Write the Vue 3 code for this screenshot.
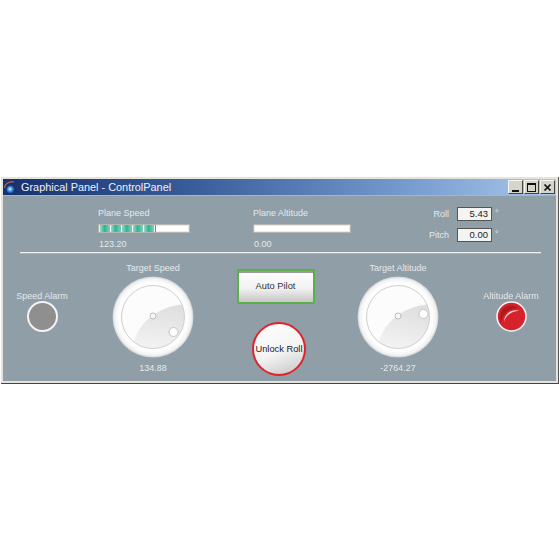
<script setup>
const segments = [0, 1, 2, 3, 4]
const knobs = {
  speed: { label: 'Target Speed', value: '134.88', x: 61.5, y: 56 },
  altitude: { label: 'Target Altitude', value: '-2764.27', x: 66.5, y: 38 }
}
</script>

<template>
  <div class="window">
    <div class="titlebar">
      <svg class="logo" width="15" height="15" viewBox="0 0 15 15">
        <defs>
          <radialGradient id="orb" cx="0.45" cy="0.45" r="0.6">
            <stop offset="0" stop-color="#e4f2ff" />
            <stop offset="0.5" stop-color="#3f8fe0" />
            <stop offset="1" stop-color="#123a80" />
          </radialGradient>
        </defs>
        <path d="M1.5 8C1.8 4 5.5 1.6 11 2" fill="none" stroke="#c8683a" stroke-width="1.2" />
        <circle cx="7.5" cy="9.5" r="3.8" fill="url(#orb)" />
      </svg>
      <span class="title">Graphical Panel - ControlPanel</span>
      <div class="controls">
        <div class="ctl"><span class="min"></span></div>
        <div class="ctl"><span class="max"></span></div>
        <div class="ctl"><svg width="9" height="9" viewBox="0 0 9 9"><path d="M1.5 1.5L7.5 7.5M7.5 1.5L1.5 7.5" stroke="#111" stroke-width="1.7" /></svg></div>
      </div>
    </div>

    <div class="panel">
      <div class="top">
        <div class="meter speed">
          <div class="label">Plane Speed</div>
          <div class="bar">
            <div class="fill">
              <span v-for="s in segments" :key="s" class="seg"></span>
              <span class="tip"></span>
            </div>
          </div>
          <div class="label val">123.20</div>
        </div>
        <div class="meter altitude">
          <div class="label">Plane Altitude</div>
          <div class="bar"></div>
          <div class="label val">0.00</div>
        </div>
        <div class="readouts">
          <div class="readout"><span class="label name">Roll</span><span class="box">5.43</span><span class="label deg">°</span></div>
          <div class="readout"><span class="label name">Pitch</span><span class="box">0.00</span><span class="label deg">°</span></div>
        </div>
      </div>

      <div class="sep"></div>

      <div class="bottom">
        <div class="alarm first">
          <div class="label">Speed Alarm</div>
          <div class="lamp off"></div>
        </div>

        <div class="knob-col first-knob">
          <div class="label">{{ knobs.speed.label }}</div>
          <svg class="knob" width="82" height="82" viewBox="0 0 82 82">
            <defs>
              <radialGradient id="kouter" cx="0.5" cy="0.5" r="0.5">
                <stop offset="0" stop-color="#ffffff" />
                <stop offset="0.86" stop-color="#fdfdfd" />
                <stop offset="0.95" stop-color="#f1f1f1" />
                <stop offset="1" stop-color="#c9cfd2" />
              </radialGradient>
              <linearGradient id="kshade" x1="0.6" y1="0" x2="0.4" y2="1">
                <stop offset="0" stop-color="#dedede" />
                <stop offset="1" stop-color="#f5f5f5" />
              </linearGradient>
              <clipPath id="kclip"><circle cx="41" cy="41" r="31.5" /></clipPath>
            </defs>
            <circle cx="41" cy="41" r="40.5" fill="url(#kouter)" />
            <circle cx="41" cy="41" r="31.5" fill="#fcfcfc" />
            <path d="M20 72C25 48 44 29 76 28L78 78Z" fill="url(#kshade)" clip-path="url(#kclip)" />
            <circle cx="41" cy="41" r="31.5" fill="none" stroke="#cfcfcf" stroke-width="1" />
            <circle cx="41" cy="40" r="3" fill="#f7f7f7" stroke="#bdbdbd" />
            <circle :cx="knobs.speed.x" :cy="knobs.speed.y" r="4.5" fill="#fff" stroke="#c4c4c4" />
          </svg>
          <div class="label val">{{ knobs.speed.value }}</div>
        </div>

        <div class="actions">
          <div class="auto">Auto Pilot</div>
          <div class="unlock">Unlock Roll</div>
        </div>

        <div class="knob-col">
          <div class="label">{{ knobs.altitude.label }}</div>
          <svg class="knob" width="82" height="82" viewBox="0 0 82 82">
            <circle cx="41" cy="41" r="40.5" fill="url(#kouter)" />
            <circle cx="41" cy="41" r="31.5" fill="#fcfcfc" />
            <path d="M20 72C25 48 44 29 76 28L78 78Z" fill="url(#kshade)" clip-path="url(#kclip)" />
            <circle cx="41" cy="41" r="31.5" fill="none" stroke="#cfcfcf" stroke-width="1" />
            <circle cx="41" cy="40" r="3" fill="#f7f7f7" stroke="#bdbdbd" />
            <circle :cx="knobs.altitude.x" :cy="knobs.altitude.y" r="4.5" fill="#fff" stroke="#c4c4c4" />
          </svg>
          <div class="label val">{{ knobs.altitude.value }}</div>
        </div>

        <div class="alarm last">
          <div class="label">Altitude Alarm</div>
          <svg class="lamp-on" width="31" height="31" viewBox="0 0 31 31">
            <circle cx="15.5" cy="15.5" r="14.5" fill="#d6222a" stroke="#f4f4f4" stroke-width="1.6" />
            <path d="M5 22C6 13 13 7.5 22 7C17 3.5 9 4 5.5 10C3.5 14 3.8 19 5 22Z" fill="#8e1218" opacity="0.55" />
            <path d="M8 21C9.5 15 14 11 23 9.5C15 8 8 13 8 21Z" fill="#f7d0d2" />
          </svg>
        </div>
      </div>
    </div>
  </div>
</template>

<style scoped>
.window {
  box-sizing: border-box;
  width: 558px;
  height: 207px;
  margin: 177px 0 0 1px;
  padding: 2px 2px 2px 2px;
  background: #e6e4da;
  border-right: 1px solid #555;
  border-bottom: 1px solid #444;
  font-family: "Liberation Sans", Arial, sans-serif;
  filter: blur(0.35px);
  display: flex;
  flex-direction: column;
}
.titlebar {
  height: 16px;
  flex: none;
  display: flex;
  align-items: center;
  padding-right: 1px;
  background: linear-gradient(90deg, #17306f 0%, #3a5e9b 35%, #7096cb 70%, #a9c8ec 100%);
  border-bottom: 1px solid #aab6bd;
}
.logo {
  flex: none;
}
.title {
  margin-left: 3px;
  font-size: 10.9px;
  color: #f0f2f6;
}
.controls {
  margin-left: auto;
  display: flex;
  gap: 1px;
}
.ctl {
  box-sizing: border-box;
  width: 15px;
  height: 14px;
  background: #d6d4cb;
  border: 1px solid;
  border-color: #f4f4f0 #444 #444 #f4f4f0;
  display: flex;
  align-items: center;
  justify-content: center;
}
.min {
  width: 7px;
  height: 2px;
  background: #111;
  margin-top: 7px;
}
.max {
  box-sizing: border-box;
  width: 9px;
  height: 9px;
  border: 1px solid #111;
  border-top-width: 2px;
}
.panel {
  flex: 1;
  background: #8f9ea7;
  display: flex;
  flex-direction: column;
}
.label {
  font-size: 9px;
  line-height: 12px;
  color: #e6eaec;
  white-space: nowrap;
}
.top {
  height: 56px;
  flex: none;
  display: flex;
  box-sizing: border-box;
  padding-top: 11px;
}
.meter {
  flex: none;
  display: flex;
  flex-direction: column;
}
.meter.speed {
  margin-left: 95px;
  width: 155px;
}
.meter.altitude {
  width: 120px;
}
.bar {
  box-sizing: border-box;
  height: 9px;
  margin-top: 5px;
  background: #fff;
  border: 1px solid #b5b5b0;
  box-shadow: inset 0 0 0 1px #ececec;
  overflow: hidden;
}
.speed .bar {
  width: 92px;
}
.altitude .bar {
  width: 98px;
}
.fill {
  height: 100%;
  display: flex;
  gap: 1px;
  padding-left: 1px;
}
.seg {
  width: 10px;
  background: linear-gradient(90deg, #9bd9c8, #2fb596 45%, #7fd0b9);
}
.tip {
  width: 1px;
  background: #2fb596;
}
.val {
  margin-top: 5px;
  padding-left: 1px;
}
.readouts {
  display: flex;
  flex-direction: column;
  gap: 7px;
}
.readout {
  display: flex;
  align-items: center;
}
.name {
  width: 76px;
  text-align: right;
  margin-right: 8px;
}
.box {
  box-sizing: border-box;
  width: 35px;
  height: 14px;
  padding-right: 3px;
  background: #f4f4f2;
  border: 1px solid #555;
  font-size: 9.5px;
  line-height: 12px;
  text-align: right;
  color: #222;
}
.deg {
  margin-left: 3px;
  margin-top: -2px;
}
.sep {
  flex: none;
  height: 1px;
  margin: 0 15px 0 17px;
  background: #eef0f0;
  box-shadow: 0 1px 0 #a9b4bb;
}
.bottom {
  flex: 1;
  display: flex;
  align-items: flex-start;
}
.alarm {
  flex: none;
  display: flex;
  flex-direction: column;
  align-items: center;
  padding-top: 39px;
}
.alarm .label {
  line-height: 9px;
}
.alarm.first {
  width: 78px;
}
.alarm.last {
  width: 112px;
}
.lamp {
  box-sizing: border-box;
  width: 31px;
  height: 31px;
  border-radius: 50%;
  background: #8f8f8f;
  border: 2px solid #f4f4f4;
}
.lamp-on {
  display: block;
}
.knob-col {
  flex: none;
  width: 114px;
  display: flex;
  flex-direction: column;
  align-items: center;
  padding-top: 9px;
}
.first-knob {
  margin-left: 15px;
}
.knob {
  display: block;
  margin-top: 2px;
}
.knob-col .val {
  margin-top: 4px;
  padding-left: 0;
}
.actions {
  flex: none;
  width: 131px;
  display: flex;
  flex-direction: column;
  align-items: center;
  padding-top: 16px;
  gap: 18px;
}
.auto {
  box-sizing: border-box;
  width: 78px;
  height: 35px;
  border: 2px solid #5cb04a;
  border-radius: 2px;
  background: linear-gradient(180deg, #fdfdfd 0%, #f2f2f2 55%, #c6c6c6 100%);
  box-shadow: inset 0 2px 0 #9a9a9a;
  font-size: 9.3px;
  line-height: 31px;
  text-align: center;
  color: #333;
}
.unlock {
  box-sizing: border-box;
  width: 54px;
  height: 54px;
  margin-left: 7px;
  border: 2px solid #e0232a;
  border-radius: 50%;
  background: linear-gradient(160deg, #ffffff 0%, #f4f4f4 55%, #c4c4c4 100%);
  font-size: 9.3px;
  line-height: 50px;
  text-align: center;
  color: #222;
  white-space: nowrap;
}
</style>
